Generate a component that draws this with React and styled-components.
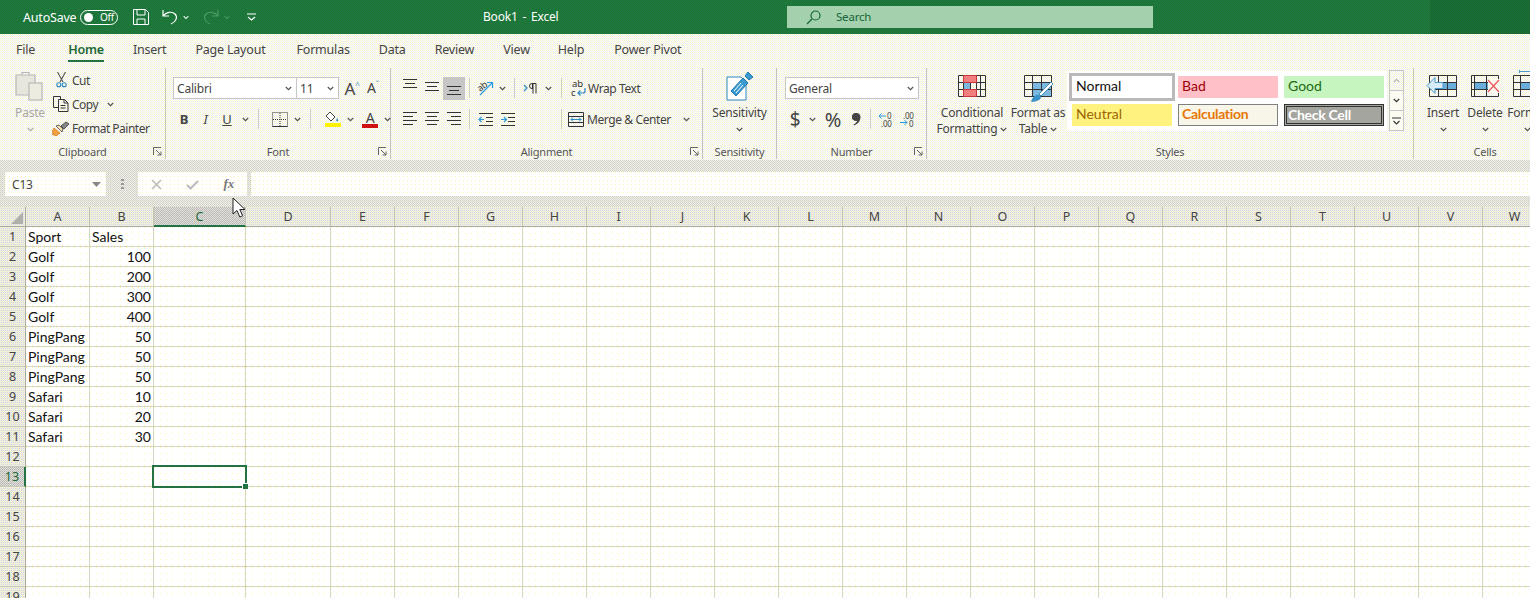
import React from "react";
import styled, { createGlobalStyle } from "styled-components";

const UI = `"Noto Sans", "Liberation Sans", sans-serif`;
const CELL = `Lato, "Liberation Sans", sans-serif`;

const dither = (a, b) => `repeating-conic-gradient(${a} 0 25%, ${b} 0 50%) 0 0 / 2px 2px`;
const speckle = (a, b, base) =>
  `conic-gradient(at 1px 1px, transparent 75%, ${a} 0) 0 0 / 2px 2px,
   conic-gradient(at 1px 1px, transparent 75%, ${b} 0) 1px 1px / 2px 2px,
   ${base}`;
const dots = (a, size) => `conic-gradient(at 1px 1px, transparent 75%, ${a} 0) 0 0 / ${size}px ${size}px, #fff`;
const RIBBON_BG = speckle("#f8f5c8", "#e8e8f0", "#fefefb");
const BAR_BG = speckle("#cfcfc4", "#d6d6d6", "#f0f0e6");
const BOX_BG = dots("#fff3a0", 4);
const HEAD_BG = speckle("#f4f2c0", "#d8d8dc", "#ececec");
const HEAD_ON_BG = speckle("#b8b8b0", "#c0c0c4", "#e0e0d8");

const GlobalStyle = createGlobalStyle`
  html, body {
    margin: 0;
    height: 100%;
    overflow: hidden;
    background: #fff;
  }
  * {
    box-sizing: border-box;
  }
`;

const Window = styled.div`
  position: relative;
  width: 1530px;
  height: 598px;
  overflow: hidden;
  font-family: ${UI};
  font-size: 12px;
  letter-spacing: -0.2px;
  color: #444;
`;

/* title bar */
const TitleBar = styled.div`
  display: grid;
  grid-template-columns: 483px 304px 366px 1fr;
  align-items: center;
  height: 34px;
  color: #fff;
  background: linear-gradient(to right, transparent 1430px, rgba(0, 40, 10, 0.14) 0),
    ${dither("#217346", "#1a7a30")};
`;

const QuickAccess = styled.div`
  display: flex;
  align-items: center;
  padding-left: 23px;
`;

const AutoSave = styled.span`
  width: 57px;
  font-size: 12.5px;
`;

const Toggle = styled.span`
  display: flex;
  align-items: center;
  gap: 7px;
  width: 38px;
  height: 15px;
  margin-right: 15px;
  padding-left: 3px;
  border: 1px solid #fff;
  border-radius: 8px;
  font-size: 10px;
  &::before {
    content: "";
    width: 9px;
    height: 9px;
    border-radius: 50%;
    background: #fff;
  }
`;

const QuickSlot = styled.span`
  display: flex;
  align-items: center;
  justify-content: center;
  width: ${(p) => p.$w}px;
  margin-right: ${(p) => p.$mr || 0}px;
`;

const DocTitle = styled.div`
  margin-top: -2px;
  font-size: 12px;
  word-spacing: 2px;
  white-space: pre;
`;

const SearchBox = styled.div`
  display: flex;
  align-items: center;
  height: 22px;
  padding-left: 19px;
  color: #17653a;
  font-size: 11.5px;
  background: ${dither("#a6d3b0", "#a2cfa9")};
`;

const SearchLabel = styled.span`
  margin-left: 15px;
  margin-top: -2px;
`;

/* tabs */
const TabBar = styled.div`
  display: flex;
  height: 32px;
  padding-left: 16px;
  background: ${RIBBON_BG};
`;

const Tab = styled.div`
  height: 28px;
  margin-right: ${(p) => p.$mr}px;
  padding-top: 7px;
  font-size: 12.5px;
  line-height: 18px;
  white-space: nowrap;
  color: ${(p) => (p.$active ? "#1d6a38" : "#444")};
  font-weight: ${(p) => (p.$active ? 600 : 400)};
  border-bottom: 2px solid ${(p) => (p.$active ? "#217346" : "transparent")};
`;

/* ribbon */
const Ribbon = styled.div`
  display: flex;
  width: 1700px;
  height: 94px;
  padding-top: 2px;
  background: ${RIBBON_BG};
`;

const Group = styled.div`
  display: flex;
  flex-direction: column;
  flex: none;
  width: ${(p) => p.$w}px;
  height: 91px;
  border-right: 1px solid #c4c4b8;
`;

const GroupBody = styled.div`
  display: flex;
  flex: 1;
  min-height: 0;
  padding-left: ${(p) => p.$pl || 0}px;
  flex-direction: ${(p) => (p.$col ? "column" : "row")};
  gap: ${(p) => p.$gap || 0}px;
  padding-top: ${(p) => p.$pt || 0}px;
`;

const GroupLabel = styled.div`
  position: relative;
  height: 15px;
  text-align: center;
  font-size: 11px;
  line-height: 15px;
  color: #555;
`;

const LauncherMark = styled.svg`
  position: absolute;
  right: 3px;
  top: 3px;
`;

const Launcher = () => (
  <LauncherMark width="9" height="9" viewBox="0 0 9 9" fill="none" stroke="#666">
    <path d="M.5 8V.5H8M3 3l5 5M8 4.5V8H4.5" />
  </LauncherMark>
);

const ToolRow = styled.div`
  display: flex;
  align-items: center;
  height: 22px;
`;

const Tool = styled.div`
  display: flex;
  flex: none;
  align-items: center;
  justify-content: center;
  width: ${(p) => p.$w}px;
  height: ${(p) => (p.$active ? "23px" : "22px")};
  margin-left: ${(p) => p.$ml || 0}px;
  padding-top: ${(p) => p.$pt || 0}px;
  padding-bottom: ${(p) => p.$pb || 0}px;
  background: ${(p) => (p.$active ? "#c6c6c6" : "transparent")};
`;

const Sep = styled.span`
  flex: none;
  width: 1px;
  height: 20px;
  margin: 0 ${(p) => p.$r ?? p.$l}px 0 ${(p) => p.$l}px;
  background: #d0d0c6;
`;

const Combo = styled.div`
  display: flex;
  flex: none;
  align-items: center;
  justify-content: space-between;
  width: ${(p) => p.$w}px;
  height: 22px;
  padding: 0 4px 0 3px;
  background: #fff;
  border: 1px solid #c6c6c6;
  margin-left: ${(p) => p.$ml || 0}px;
`;

const ClipStack = styled.div`
  display: flex;
  flex-direction: column;
  letter-spacing: -0.5px;
`;

const ClipItem = styled.div`
  display: flex;
  align-items: center;
  height: 24px;
  white-space: nowrap;
`;

const ClipIcon = styled.span`
  display: flex;
  justify-content: center;
  width: 22px;
`;

const ClipChevron = styled.span`
  display: flex;
  margin-left: 9px;
`;

const BigTool = styled.div`
  display: flex;
  flex: none;
  flex-direction: column;
  align-items: center;
  width: ${(p) => p.$w}px;
  margin-left: ${(p) => p.$ml || 0}px;
  padding-top: 2px;
  line-height: 16px;
  text-align: center;
  white-space: nowrap;
  color: ${(p) => (p.$muted ? "#a8a8a8" : "#444")};
`;

const BigIcon = styled.span`
  display: flex;
  align-items: center;
  justify-content: center;
  height: 32px;
  margin-bottom: 3px;
`;

const BigLine = styled.span`
  display: flex;
  align-items: center;
  justify-content: center;
  gap: 3px;
  height: 16px;
`;

const WideTool = styled.div`
  display: flex;
  align-items: center;
  white-space: nowrap;
`;

const WideLabel = styled.span`
  margin: 0 ${(p) => p.$mr || 0}px 0 ${(p) => p.$ml}px;
  letter-spacing: -0.4px;
`;

const GrowLetter = styled.span`
  font-size: ${(p) => p.$size}px;
  line-height: 1;
  color: #444;
`;

const ToolLetter = styled.span`
  font-size: ${(p) => p.$size || 13}px;
  font-weight: ${(p) => (p.$bold ? 700 : 400)};
  font-style: ${(p) => (p.$italic ? "italic" : "normal")};
  text-decoration: ${(p) => (p.$under ? "underline" : "none")};
  color: #444;
`;

const ColorStack = styled.span`
  display: flex;
  flex-direction: column;
  align-items: center;
  width: 16px;
  margin-top: 1px;
  font-size: 14px;
  line-height: 13px;
  color: #444;
  &::after {
    content: "";
    width: 16px;
    height: 4px;
    background: #d01010;
  }
`;

/* style gallery */
const Gallery = styled.div`
  display: grid;
  flex: none;
  grid-template-columns: repeat(3, 100px);
  grid-auto-rows: 22px;
  gap: 6px;
  width: 320px;
  height: 60px;
  margin: 3px 0 0 2px;
  padding: 5px 3px 5px 5px;
  background: #fff;
`;

const STYLE_SWATCHES = {
  normal: "background:#fff;color:#111;outline:3px solid #b9b9b9;outline-offset:0;",
  bad: "background:#ffc0c8;color:#9c0006;",
  good: "background:#c6f5c0;color:#1c6b12;",
  neutral: "background:#fff27e;color:#9c6500;",
  calc: "background:#f7f6e8;color:#e8770a;font-weight:700;border:1px solid #7f7f7f;letter-spacing:-.3px;padding-left:3px;line-height:18px;",
  check:
    "background:#a5a5a0;color:#fff;font-weight:700;border:3px double #333;padding-left:1px;letter-spacing:-.3px;line-height:15px;",
};

const Swatch = styled.div`
  padding-left: 4px;
  font-family: ${CELL};
  font-size: 14px;
  line-height: 20px;
  letter-spacing: 0;
  ${(p) => STYLE_SWATCHES[p.$kind]}
`;

const Scroller = styled.div`
  display: flex;
  flex-direction: column;
  flex: none;
  width: 15px;
  height: 60px;
  margin: 3px 0 0 2px;
`;

const ScrollBtn = styled.div`
  display: flex;
  flex: 1;
  align-items: center;
  justify-content: center;
  border: 1px solid #c6c6c6;
  margin-top: -1px;
  background: ${(p) => (p.$off ? "transparent" : "#fbfbf2")};
`;

/* formula bar */
const FormulaBar = styled.div`
  display: flex;
  align-items: flex-start;
  height: 47px;
  padding: 12px 0 0 5px;
  background: ${BAR_BG};
`;

const NameBox = styled.div`
  display: flex;
  flex: none;
  align-items: center;
  justify-content: space-between;
  width: 101px;
  height: 24px;
  padding: 0 5px 0 7px;
  background: ${BOX_BG};
`;

const Grip = styled.div`
  flex: none;
  width: 3px;
  height: 11px;
  margin: 7px 14px 0 15px;
  background: repeating-linear-gradient(#999 0 2px, transparent 2px 4px);
`;

const FxBox = styled.div`
  display: flex;
  flex: none;
  align-items: center;
  width: 109px;
  height: 24px;
  background: ${BOX_BG};
`;

const FxSlot = styled.span`
  display: flex;
  justify-content: center;
  width: 37px;
`;

const FxText = styled.span`
  font-family: "Liberation Serif", serif;
  font-style: italic;
  font-weight: 700;
  font-size: 13px;
  color: #777;
`;

const FormulaInput = styled.div`
  flex: 1;
  height: 24px;
  margin-left: 4px;
  background: ${BOX_BG};
`;

/* sheet */
const Sheet = styled.div`
  display: grid;
  grid-template-columns: 26px 64px 64px 92px 85px repeat(19, 64px);
  grid-auto-rows: 20px;
  width: 1640px;
  font-family: ${CELL};
  font-size: 14px;
  letter-spacing: 0;
  color: #111;
`;

const Corner = styled.div`
  position: relative;
  border-right: 1px solid #a8a8a8;
  border-bottom: 1px solid #a8a8a8;
  background: ${HEAD_BG};
  &::after {
    content: "";
    position: absolute;
    right: 2px;
    bottom: 2px;
    border-style: solid;
    border-width: 0 0 12px 12px;
    border-color: transparent transparent #b0b0aa transparent;
  }
`;

const ColHead = styled.div`
  text-align: center;
  font-family: ${UI};
  font-size: 12.5px;
  line-height: 19px;
  color: ${(p) => (p.$on ? "#1d6a38" : "#444")};
  border-right: 1px solid #c0c0b8;
  background: ${(p) => (p.$on ? HEAD_ON_BG : HEAD_BG)};
  border-bottom: ${(p) => (p.$on ? "2px solid #217346" : "1px solid #a8a8a8")};
`;

const RowHead = styled.div`
  text-align: center;
  font-family: ${UI};
  font-size: 12.5px;
  line-height: 20px;
  color: ${(p) => (p.$on ? "#1d6a38" : "#444")};
  border-bottom: 1px solid #c8c8c0;
  background: ${(p) => (p.$on ? HEAD_ON_BG : HEAD_BG)};
  border-right: ${(p) => (p.$on ? "2px solid #217346" : "1px solid #a8a8a8")};
`;

const Cell = styled.div`
  position: relative;
  padding: 0 2px;
  line-height: 20px;
  white-space: nowrap;
  text-align: ${(p) => (p.$num ? "right" : "left")};
  border-right: 1px solid #d6d6c6;
  border-bottom: 1px solid #d6d6c6;
  background: ${dots("#fff7a8", 6)};
  ${(p) =>
    p.$selected &&
    `
    z-index: 2;
    &::before {
      content: "";
      position: absolute;
      inset: -2px;
      border: 2px solid #217346;
    }
    &::after {
      content: "";
      position: absolute;
      right: -3px;
      bottom: -3px;
      width: 5px;
      height: 5px;
      background: #217346;
      border-left: 1px solid #fff;
      border-top: 1px solid #fff;
      box-sizing: content-box;
    }
  `}
`;

const Pointer = styled.svg`
  position: absolute;
  left: 232px;
  top: 197px;
`;

const GridSvg = styled.svg`
  overflow: visible;
`;

/* icons */
const Chevron = ({ color = "#555" }) => (
  <svg width="7" height="5" viewBox="0 0 7 5" fill="none" stroke={color} strokeWidth="1.2">
    <path d="M.8 1l2.7 2.7L6.2 1" />
  </svg>
);

const Lines = ({ rows, w = 14, h = 9 }) => (
  <svg width={w} height={h + 1} fill="none" stroke="#333">
    {rows.map(([x1, x2, y]) => (
      <path key={y + "" + x1} d={`M${x1} ${y}.5H${x2}`} />
    ))}
  </svg>
);

const GridIcon = ({ children, over, w = 28, h = 22, cols = [9.5, 18.5], rowsY = [7.5, 14.5] }) => (
  <GridSvg width={w} height={h} viewBox={`0 0 ${w} ${h}`} fill="none">
    {children}
    <path
      d={`M.5.5H${w - 0.5}V${h - 0.5}H.5Z${cols.map((c) => `M${c} 0V${h}`).join("")}${rowsY
        .map((r) => `M0 ${r}H${w}`)
        .join("")}`}
      stroke="#333"
    />
    {over}
  </GridSvg>
);

const PasteIcon = () => (
  <svg width="30" height="30" viewBox="0 0 30 30" fill="none" stroke="#b8b8b8" strokeWidth="1.2">
    <path d="M6 4h14v20H1V4z" fill="#e6e6dc" />
    <path d="M7 4V1.5h7V4" />
    <rect x="14" y="12" width="13" height="17" fill="#ecece0" />
  </svg>
);

const CutIcon = () => (
  <svg width="11" height="16" viewBox="0 0 11 16" fill="none" strokeWidth="1.1">
    <path d="M1.5 0l5.5 10M9.5 0L4 10" stroke="#555" />
    <circle cx="2.8" cy="12.8" r="2" stroke="#2b88c0" />
    <circle cx="8.2" cy="12.8" r="2" stroke="#2b88c0" />
  </svg>
);

const CopyIcon = () => (
  <svg width="16" height="16" viewBox="0 0 16 16" fill="none" stroke="#333">
    <path d="M5 11.5H.5V.5h7v3" />
    <path d="M5.5 3.5h6l3.5 3.5v8.5H5.5zM11 3.5V7h4M7.5 9.5h5M7.5 12h5" />
  </svg>
);

const PainterIcon = () => (
  <svg width="18" height="15" viewBox="0 0 18 15" fill="none">
    <path d="M2 7l6 5-4 3-4-2 2-1-2-1z" fill="#f0a040" stroke="#d5801c" strokeWidth=".8" />
    <path d="M4 5l3-1 4 4-1 3z" fill="#f8e0b0" stroke="#555" strokeWidth=".9" />
    <path d="M9 5l5-4 3 2-5 5z" fill="#888" stroke="#444" strokeWidth=".9" />
  </svg>
);

const BordersIcon = () => (
  <svg width="16" height="15" viewBox="0 0 16 15" fill="none" stroke="#333" strokeDasharray="1 1">
    <path d="M.5.5h15v14H.5zM8 1v13M1 7.5h14" />
    <path d="M.5 14.5h15" strokeDasharray="none" />
  </svg>
);

const FillIcon = () => (
  <svg width="16" height="16" viewBox="0 0 16 16" fill="none">
    <path d="M5 1l5 5-4 4-5-5z" stroke="#444" fill="#fff" />
    <path d="M12 7c1 1.5 1.5 2.4 1 3s-1.5.4-1.7-.3c-.1-.6.3-1.700.7-2.700z" fill="#2b88c0" />
    <rect y="12" width="16" height="4" fill="#fff200" />
  </svg>
);

const CommaIcon = () => (
  <svg width="9" height="13" viewBox="0 0 9 13">
    <path d="M4.500 0a4 4 0 014 4.300c0 3.600-2.600 6.700-6.400 8.200l-.6-1c2-1 3.300-2.300 3.700-3.800A4 4 0 114.500 0z" fill="#444" />
  </svg>
);

const Caret = styled.span`
  align-self: flex-start;
  margin-top: 2px;
  font-size: 8px;
  color: #3b93c8;
`;

const OrientIcon = () => (
  <svg width="17" height="16" viewBox="0 0 17 16" fill="none">
    <text x="1" y="10" fontSize="9" fontFamily="Noto Sans" fill="#333" transform="rotate(-40 5 8)">
      ab
    </text>
    <path d="M3 15L15 3M10 2.500h5.500V8" stroke="#2b9ad8" strokeWidth="1.200" />
  </svg>
);

const RtlIcon = () => (
  <svg width="15" height="11" viewBox="0 0 15 11" fill="none">
    <path d="M1 2l3 3-3 3" stroke="#2b88c0" strokeWidth="1.200" />
    <path d="M10 .5v10M13 .5v10M13 .5H9a2.500 2.500 0 000 5h1" stroke="#333" />
    <path d="M9 1h1v4H9z" fill="#333" />
  </svg>
);

const WrapIcon = () => (
  <svg width="15" height="17" viewBox="0 0 15 17">
    <text x="1" y="7" fontSize="9.5" fontFamily="Noto Sans" fill="#333">
      ab
    </text>
    <text x="0" y="16" fontSize="9.5" fontFamily="Noto Sans" fill="#333">
      c
    </text>
    <path d="M14 8v3a2 2 0 01-2 2H7M9.500 10.500L7 13l2.500 2.500" fill="none" stroke="#2b88c0" strokeWidth="1.200" />
  </svg>
);

const MergeIcon = () => (
  <svg width="16" height="15" viewBox="0 0 16 15" fill="none">
    <path d="M.5.500h15v14H.5zM1 4.500h14M1 10.500h14" stroke="#333" />
    <path d="M3 7.500h10M5 5.500l-2 2 2 2M11 5.500l2 2-2 2" stroke="#2b88c0" />
  </svg>
);

const IndentIcon = ({ flip }) => (
  <svg width="15" height="13" viewBox="0 0 15 13" fill="none">
    <path d="M1 .500h14M8 4.500h7M8 8.500h7M1 12.500h14" stroke="#333" />
    {flip ? (
      <path d="M1 6.500h5M4 4l2.500 2.500L4 9" stroke="#2b9ad8" strokeWidth="1.200" />
    ) : (
      <path d="M1 6.500h5M3.500 4L1 6.500 3.500 9" stroke="#2b9ad8" strokeWidth="1.200" />
    )}
  </svg>
);

const DecimalIcon = ({ more }) => (
  <svg width="16" height="15" viewBox="0 0 16 15">
    <text x={more ? 3 : 9} y="6.500" fontSize="8" fontFamily="Noto Sans" fill="#444">
      {more ? ".00" : "0"}
    </text>
    <text x={more ? 9 : 3} y="14.500" fontSize="8" fontFamily="Noto Sans" fill="#444">
      {more ? "0" : ".00"}
    </text>
    <path
      d={more ? "M0 10.500h7M4.500 8l2.500 2.500L4.500 13" : "M8 4H1M3.500 1.500L1 4l2.500 2.500"}
      fill="none"
      stroke="#2b9ad8"
    />
  </svg>
);

const SensitivityIcon = () => (
  <svg width="28" height="30" viewBox="0 0 28 30" fill="none">
    <path d="M1 6h14l5 5v18H1z" fill="#fff" stroke="#2b88c0" />
    <path d="M5 20L17 7l5 5-12 13z" fill="#3b9ad0" stroke="#1e78ac" />
    <path d="M8 20l7-8M10 22l7-8" stroke="#fff" />
    <path d="M19 5l3-4 5 5-4 3z" fill="#3b9ad0" stroke="#1e78ac" />
  </svg>
);

const PointerIcon = () => (
  <Pointer width="15" height="22" viewBox="0 0 15 22">
    <path d="M1 1v16l4-3.500 2.800 6.500 2.800-1.200-2.800-6.300H13z" fill="#fff" stroke="#222" />
  </Pointer>
);

const COLS = "ABCDEFGHIJKLMNOPQRSTUVW".split("");
const DATA = [
  ["Sport", "Sales"],
  ["Golf", 100],
  ["Golf", 200],
  ["Golf", 300],
  ["Golf", 400],
  ["PingPang", 50],
  ["PingPang", 50],
  ["PingPang", 50],
  ["Safari", 10],
  ["Safari", 20],
  ["Safari", 30],
];
const ROWS = Array.from({ length: 19 }, (_, i) => i + 1);
const TABS = [
  ["File", 33],
  ["Home", 29],
  ["Insert", 29],
  ["Page Layout", 31],
  ["Formulas", 29],
  ["Data", 29],
  ["Review", 29],
  ["View", 28],
  ["Help", 30],
  ["Power Pivot", 0],
];

export default function App() {
  return (
    <Window>
      <GlobalStyle />
      <TitleBar>
        <QuickAccess>
          <AutoSave>AutoSave</AutoSave>
          <Toggle>Off</Toggle>
          <QuickSlot $w={16} $mr={13}>
            <svg width="16" height="16" viewBox="0 0 16 16" fill="none" stroke="#fff">
              <path d="M.5.500h12l3 3v12H.5zM4 1v5h8V1M4 15.500V10h8v5.500" />
            </svg>
          </QuickSlot>
          <QuickSlot $w={16} $mr={5}>
            <svg width="16" height="16" viewBox="0 0 16 16" fill="none" stroke="#fff" strokeWidth="1.200">
              <path d="M1 1v6h6M1 7c3-4 9-5 12-2 3 3 1 8-4 10" />
            </svg>
          </QuickSlot>
          <QuickSlot $w={6} $mr={13}>
            <Chevron color="#fff" />
          </QuickSlot>
          <QuickSlot $w={17} $mr={5}>
            <svg width="16" height="16" viewBox="0 0 16 16" fill="none" stroke="#4c9a66" strokeWidth="1.200">
              <path d="M15 1v6H9M15 7C12 3 6 2 3 5c-3 3-1 8 4 10" />
            </svg>
          </QuickSlot>
          <QuickSlot $w={6} $mr={17}>
            <Chevron color="#4c9a66" />
          </QuickSlot>
          <QuickSlot $w={9}>
            <svg width="9" height="8" viewBox="0 0 9 8" fill="none" stroke="#fff" strokeWidth="1.200">
              <path d="M0 1h9M1 4l3.500 3L8 4" />
            </svg>
          </QuickSlot>
        </QuickAccess>
        <DocTitle>Book1 - Excel</DocTitle>
        <SearchBox>
          <svg width="15" height="15" viewBox="0 0 15 15" fill="none" stroke="#17653a" strokeWidth="1.200">
            <circle cx="9.500" cy="5.500" r="4.500" />
            <path d="M6 9l-5 5" />
          </svg>
          <SearchLabel>Search</SearchLabel>
        </SearchBox>
        <span />
      </TitleBar>

      <TabBar>
        {TABS.map(([name, gap]) => (
          <Tab key={name} $mr={gap} $active={name === "Home"}>
            {name}
          </Tab>
        ))}
      </TabBar>

      <Ribbon>
        <Group $w={166}>
          <GroupBody $pl={10}>
            <BigTool $w={40} $muted>
              <BigIcon>
                <PasteIcon />
              </BigIcon>
              <BigLine>Paste</BigLine>
              <BigLine>
                <Chevron color="#aaa" />
              </BigLine>
            </BigTool>
            <ClipStack>
              <ClipItem>
                <ClipIcon>
                  <CutIcon />
                </ClipIcon>
                Cut
              </ClipItem>
              <ClipItem>
                <ClipIcon>
                  <CopyIcon />
                </ClipIcon>
                Copy
                <ClipChevron>
                  <Chevron />
                </ClipChevron>
              </ClipItem>
              <ClipItem>
                <ClipIcon>
                  <PainterIcon />
                </ClipIcon>
                Format Painter
              </ClipItem>
            </ClipStack>
          </GroupBody>
          <GroupLabel>
            Clipboard
            <Launcher />
          </GroupLabel>
        </Group>

        <Group $w={225}>
          <GroupBody $col $pl={7} $pt={9} $gap={9}>
            <ToolRow>
              <Combo $w={124}>
                Calibri
                <Chevron />
              </Combo>
              <Combo $w={43} $ml={-1}>
                11
                <Chevron />
              </Combo>
              <Tool $w={22} $ml={2}>
                <GrowLetter $size={17}>A</GrowLetter>
                <Caret>^</Caret>
              </Tool>
              <Tool $w={20}>
                <GrowLetter $size={14}>A</GrowLetter>
                <Caret>ˇ</Caret>
              </Tool>
            </ToolRow>
            <ToolRow>
              <Tool $w={22}>
                <ToolLetter $bold>B</ToolLetter>
              </Tool>
              <Tool $w={21}>
                <ToolLetter $italic>I</ToolLetter>
              </Tool>
              <Tool $w={22}>
                <ToolLetter $under>U</ToolLetter>
              </Tool>
              <Tool $w={14}>
                <Chevron />
              </Tool>
              <Sep $l={6} />
              <Tool $w={22} $ml={4}>
                <BordersIcon />
              </Tool>
              <Tool $w={12}>
                <Chevron />
              </Tool>
              <Sep $l={7} />
              <Tool $w={22} $ml={4}>
                <FillIcon />
              </Tool>
              <Tool $w={12}>
                <Chevron />
              </Tool>
              <Tool $w={22} $ml={3}>
                <ColorStack>A</ColorStack>
              </Tool>
              <Tool $w={12}>
                <Chevron />
              </Tool>
            </ToolRow>
          </GroupBody>
          <GroupLabel>
            Font
            <Launcher />
          </GroupLabel>
        </Group>

        <Group $w={312}>
          <GroupBody $col $pl={8} $pt={9} $gap={9}>
            <ToolRow>
              <Tool $w={22} $pb={8}>
                <Lines rows={[[0, 14, 0], [2, 12, 4], [0, 14, 8]]} />
              </Tool>
              <Tool $w={22} $pb={2}>
                <Lines rows={[[0, 14, 0], [2, 12, 4], [0, 14, 8]]} />
              </Tool>
              <Tool $w={22} $active $pt={6}>
                <Lines rows={[[0, 14, 0], [2, 12, 4], [0, 14, 8]]} />
              </Tool>
              <Sep $l={4} />
              <Tool $w={22}>
                <OrientIcon />
              </Tool>
              <Tool $w={12}>
                <Chevron />
              </Tool>
              <Sep $l={6} $r={4} />
              <Tool $w={22}>
                <RtlIcon />
              </Tool>
              <Tool $w={14}>
                <Chevron />
              </Tool>
              <Sep $l={6} $r={9} />
              <WideTool>
                <WrapIcon />
                <WideLabel $ml={2}>Wrap Text</WideLabel>
              </WideTool>
            </ToolRow>
            <ToolRow>
              <Tool $w={22}>
                <Lines rows={[[0, 14, 0], [0, 10, 4], [0, 14, 8], [0, 10, 12]]} h={13} />
              </Tool>
              <Tool $w={22}>
                <Lines rows={[[0, 14, 0], [2, 12, 4], [0, 14, 8], [2, 12, 12]]} h={13} />
              </Tool>
              <Tool $w={22}>
                <Lines rows={[[0, 14, 0], [4, 14, 4], [0, 14, 8], [4, 14, 12]]} h={13} />
              </Tool>
              <Sep $l={4} />
              <Tool $w={22}>
                <IndentIcon />
              </Tool>
              <Tool $w={22}>
                <IndentIcon flip />
              </Tool>
              <Sep $l={43} $r={6} />
              <WideTool>
                <MergeIcon />
                <WideLabel $ml={3} $mr={12}>
                  Merge &amp; Center
                </WideLabel>
                <Chevron />
              </WideTool>
            </ToolRow>
          </GroupBody>
          <GroupLabel>
            Alignment
            <Launcher />
          </GroupLabel>
        </Group>

        <Group $w={74}>
          <GroupBody>
            <BigTool $w={73}>
              <BigIcon>
                <SensitivityIcon />
              </BigIcon>
              <BigLine>Sensitivity</BigLine>
              <BigLine>
                <Chevron />
              </BigLine>
            </BigTool>
          </GroupBody>
          <GroupLabel>Sensitivity</GroupLabel>
        </Group>

        <Group $w={150}>
          <GroupBody $col $pl={8} $pt={9} $gap={9}>
            <ToolRow>
              <Combo $w={134}>
                General
                <Chevron />
              </Combo>
            </ToolRow>
            <ToolRow>
              <Tool $w={20}>
                <ToolLetter $size={19}>$</ToolLetter>
              </Tool>
              <Tool $w={15}>
                <Chevron />
              </Tool>
              <Tool $w={26}>
                <ToolLetter $size={20}>%</ToolLetter>
              </Tool>
              <Tool $w={20}>
                <CommaIcon />
              </Tool>
              <Sep $l={4} />
              <Tool $w={22}>
                <DecimalIcon />
              </Tool>
              <Tool $w={22}>
                <DecimalIcon more />
              </Tool>
            </ToolRow>
          </GroupBody>
          <GroupLabel>
            Number
            <Launcher />
          </GroupLabel>
        </Group>

        <Group $w={487}>
          <GroupBody $pl={8}>
            <BigTool $w={74}>
              <BigIcon>
                <GridIcon
                  cols={[5.5, 12.5, 18.5, 22.5]}
                  over={
                    <>
                      <path d="M5.500 .5h13v7h-13zM5.500 14.500h13v7h-13z" fill="#f08080" stroke="#c8343c" />
                    </>
                  }
                >
                  <rect x="5" y="7" width="8" height="7" fill="#7cb8e0" />
                </GridIcon>
              </BigIcon>
              <BigLine>Conditional</BigLine>
              <BigLine>
                Formatting <Chevron />
              </BigLine>
            </BigTool>
            <BigTool $w={54} $ml={2}>
              <BigIcon>
                <GridIcon
                  cols={[8.5, 17.5]}
                  over={
                    <>
                      <path d="M15 19L27 7l2 2-12 12z" fill="#fff" stroke="#4b8fb8" />
                      <path d="M7 27c1-5 5-8 8-7 3 1 2 4 0 5-2 1-5 2-8 2z" fill="#3b93c8" />
                    </>
                  }
                >
                  <rect x="9" y="7" width="19" height="15" fill="#7cb8e0" />
                </GridIcon>
              </BigIcon>
              <BigLine>Format as</BigLine>
              <BigLine>
                Table <Chevron />
              </BigLine>
            </BigTool>
            <Gallery>
              <Swatch $kind="normal">Normal</Swatch>
              <Swatch $kind="bad">Bad</Swatch>
              <Swatch $kind="good">Good</Swatch>
              <Swatch $kind="neutral">Neutral</Swatch>
              <Swatch $kind="calc">Calculation</Swatch>
              <Swatch $kind="check">Check Cell</Swatch>
            </Gallery>
            <Scroller>
              <ScrollBtn $off>
                <svg width="7" height="5" viewBox="0 0 7 5" fill="none" stroke="#bbb" strokeWidth="1.200">
                  <path d="M.8 4l2.700-2.700L6.200 4" />
                </svg>
              </ScrollBtn>
              <ScrollBtn>
                <Chevron color="#333" />
              </ScrollBtn>
              <ScrollBtn>
                <svg width="9" height="8" viewBox="0 0 9 8" fill="none" stroke="#333" strokeWidth="1.100">
                  <path d="M0 1h9M1.500 4l3 3 3-3" />
                </svg>
              </ScrollBtn>
            </Scroller>
          </GroupBody>
          <GroupLabel>Styles</GroupLabel>
        </Group>

        <Group $w={143}>
          <GroupBody $pl={8}>
            <BigTool $w={42}>
              <BigIcon>
                <GridIcon over={<path d="M-2 10.500l8-8v5h8v6H6v5z" fill="#d8ecf8" stroke="#4a9ad0" />}>
                  <rect x="5" y="7" width="23" height="7" fill="#6aaedc" />
                </GridIcon>
              </BigIcon>
              <BigLine>Insert</BigLine>
              <BigLine>
                <Chevron />
              </BigLine>
            </BigTool>
            <BigTool $w={42}>
              <BigIcon>
                <GridIcon
                  cols={[3.5, 15.5]}
                  over={
                    <>
                      <rect x="17" y="4" width="12" height="14" fill="#fbfbf2" />
                      <path d="M17 5l11 12M28 5L17 17" stroke="#e85a5a" strokeWidth="1.300" />
                    </>
                  }
                >
                  <rect x="3" y="7" width="15" height="7" fill="#6aaedc" />
                </GridIcon>
              </BigIcon>
              <BigLine>Delete</BigLine>
              <BigLine>
                <Chevron />
              </BigLine>
            </BigTool>
            <BigTool $w={42}>
              <BigIcon>
                <GridIcon cols={[7.5, 17.5]} over={<path d="M6.500 -5v3M6.500 -3.500H28" stroke="#4a9ad0" />}>
                  <rect x="7" y="7" width="21" height="7" fill="#6aaedc" />
                </GridIcon>
              </BigIcon>
              <BigLine>Format</BigLine>
              <BigLine>
                <Chevron />
              </BigLine>
            </BigTool>
          </GroupBody>
          <GroupLabel>Cells</GroupLabel>
        </Group>
      </Ribbon>

      <FormulaBar>
        <NameBox>
          C13
          <svg width="9" height="5" viewBox="0 0 9 5">
            <path d="M0 0h9L4.500 5z" fill="#888" />
          </svg>
        </NameBox>
        <Grip />
        <FxBox>
          <FxSlot>
            <svg width="11" height="11" viewBox="0 0 11 11" fill="none" stroke="#bbb" strokeWidth="1.500">
              <path d="M1 1l9 9M10 1l-9 9" />
            </svg>
          </FxSlot>
          <FxSlot>
            <svg width="13" height="11" viewBox="0 0 13 11" fill="none" stroke="#bbb" strokeWidth="2">
              <path d="M1 6l3.500 3.500L12 2" />
            </svg>
          </FxSlot>
          <FxSlot>
            <FxText>fx</FxText>
          </FxSlot>
        </FxBox>
        <FormulaInput />
      </FormulaBar>

      <Sheet>
        <Corner />
        {COLS.map((c) => (
          <ColHead key={c} $on={c === "C"}>
            {c}
          </ColHead>
        ))}
        {ROWS.map((r) => (
          <React.Fragment key={r}>
            <RowHead $on={r === 13}>{r}</RowHead>
            {COLS.map((c, i) => {
              const value = i < 2 && DATA[r - 1] ? DATA[r - 1][i] : "";
              return (
                <Cell key={c} $num={typeof value === "number"} $selected={r === 13 && c === "C"}>
                  {value}
                </Cell>
              );
            })}
          </React.Fragment>
        ))}
      </Sheet>

      <PointerIcon />
    </Window>
  );
}
